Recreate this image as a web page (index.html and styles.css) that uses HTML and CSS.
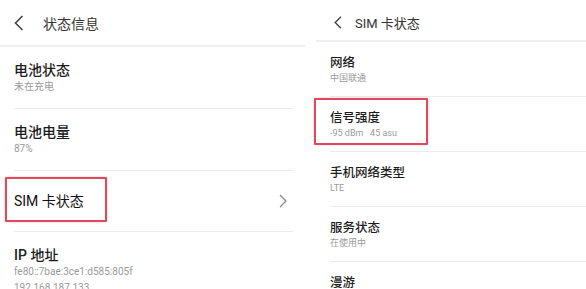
FILE: index.html
```html
<!DOCTYPE html>
<html lang="zh-CN">
<head>
  <meta charset="UTF-8">
  <title>状态信息</title>
  <link rel="stylesheet" href="styles.css">
</head>
<body>

  <div class="screens">
    <!-- 左侧：状态信息 -->
    <div class="panel panel-left">
      <div class="topbar">
        <svg class="back" width="10" height="16" viewBox="0 0 10 16"><path d="M8.5 1 L1.5 8 L8.5 15" fill="none" stroke="#444" stroke-width="1.6"/></svg>
        <span class="topbar-title">状态信息</span>
      </div>
      <div class="list">
        <div class="item">
          <div class="item-title">电池状态</div>
          <div class="item-sub">未在充电</div>
        </div>
        <div class="item">
          <div class="item-title">电池电量</div>
          <div class="item-sub">87%</div>
        </div>
        <div class="item item-link">
          <div class="item-title">SIM 卡状态</div>
          <svg class="chevron" width="8" height="14" viewBox="0 0 8 14"><path d="M1 1 L7 7 L1 13" fill="none" stroke="#888" stroke-width="1.3"/></svg>
          <div class="mark mark-sim"></div>
        </div>
        <div class="item">
          <div class="item-title">IP 地址</div>
          <div class="item-sub">fe80::7bae:3ce1:d585:805f</div>
          <div class="item-sub">192.168.187.133</div>
        </div>
      </div>
    </div>

    <!-- 右侧：SIM 卡状态 -->
    <div class="panel panel-right">
      <div class="topbar">
        <svg class="back" width="8" height="13" viewBox="0 0 8 13"><path d="M7 0.8 L1.2 6.5 L7 12.2" fill="none" stroke="#444" stroke-width="1.4"/></svg>
        <span class="topbar-title">SIM 卡状态</span>
      </div>
      <div class="list">
        <div class="item">
          <div class="item-title">网络</div>
          <div class="item-sub">中国联通</div>
        </div>
        <div class="item">
          <div class="item-title">信号强度</div>
          <div class="item-sub">-95 dBm&nbsp;&nbsp;&nbsp;45 asu</div>
          <div class="mark mark-signal"></div>
        </div>
        <div class="item">
          <div class="item-title">手机网络类型</div>
          <div class="item-sub">LTE</div>
        </div>
        <div class="item">
          <div class="item-title">服务状态</div>
          <div class="item-sub">在使用中</div>
        </div>
        <div class="item">
          <div class="item-title">漫游</div>
        </div>
      </div>
    </div>
  </div>

</body>
</html>
```

FILE: styles.css
```css
body {
  margin: 0;
  background: #fff;
  font-family: Roboto, "Noto Sans CJK SC", sans-serif;
  color: #1c1c1c;
  overflow: hidden;
}

.screens {
  display: flex;
  height: 289px;
}

.panel {
  overflow: hidden;
}

.panel-left {
  width: 305px;
}

.panel-right {
  flex: 1;
  padding-left: 11px;
}

/* top bar */
.topbar {
  display: flex;
  align-items: center;
  border-bottom: 2px solid #efefef;
}

.panel-left .topbar {
  height: 45px;
  padding-left: 14px;
}

.panel-left .back {
  margin-right: 19px;
}

.panel-left .topbar-title {
  font-size: 14px;
  color: #333;
}

.panel-right .topbar {
  height: 36px;
  padding: 4px 0 0 18px;
}

.panel-right .back {
  margin-right: 13px;
}

.panel-right .topbar-title {
  font-size: 13px;
  color: #333;
}

/* list */
.item {
  position: relative;
  border-bottom: 1px solid #ebebeb;
}

.panel-left .list {
  padding: 0 12px 0 14px;
}

.panel-left .item {
  padding: 14px 0 13px;
}

.panel-left .item-title {
  font-size: 14px;
  line-height: 18px;
  font-weight: 500;
}

.panel-left .item-sub {
  font-size: 10px;
  line-height: 16px;
  color: #9a9a9a;
}

.panel-left .item-link {
  display: flex;
  align-items: center;
  justify-content: space-between;
  height: 60px;
  padding: 0;
}

.panel-left .item-link .item-title {
  font-weight: 400;
  color: #111;
}

.chevron {
  margin-right: 6px;
}

.panel-right .list {
  padding-left: 14px;
}

.panel-right .item {
  padding: 13px 0 11px;
}

.panel-right .item-title {
  font-size: 12.5px;
  line-height: 16px;
  font-weight: 500;
}

.panel-right .item-sub {
  font-size: 9px;
  line-height: 14px;
  color: #9a9a9a;
}

/* red marks drawn over the screenshot */
.mark {
  position: absolute;
  border: 2px solid #e2485c;
  border-radius: 1px;
  box-shadow: 0 0 2px rgba(226, 72, 92, 0.4);
}

.mark-sim {
  left: -9px;
  top: 6px;
  width: 98px;
  height: 41px;
}

.mark-signal {
  left: -16px;
  top: 1px;
  width: 110px;
  height: 43px;
}
```
